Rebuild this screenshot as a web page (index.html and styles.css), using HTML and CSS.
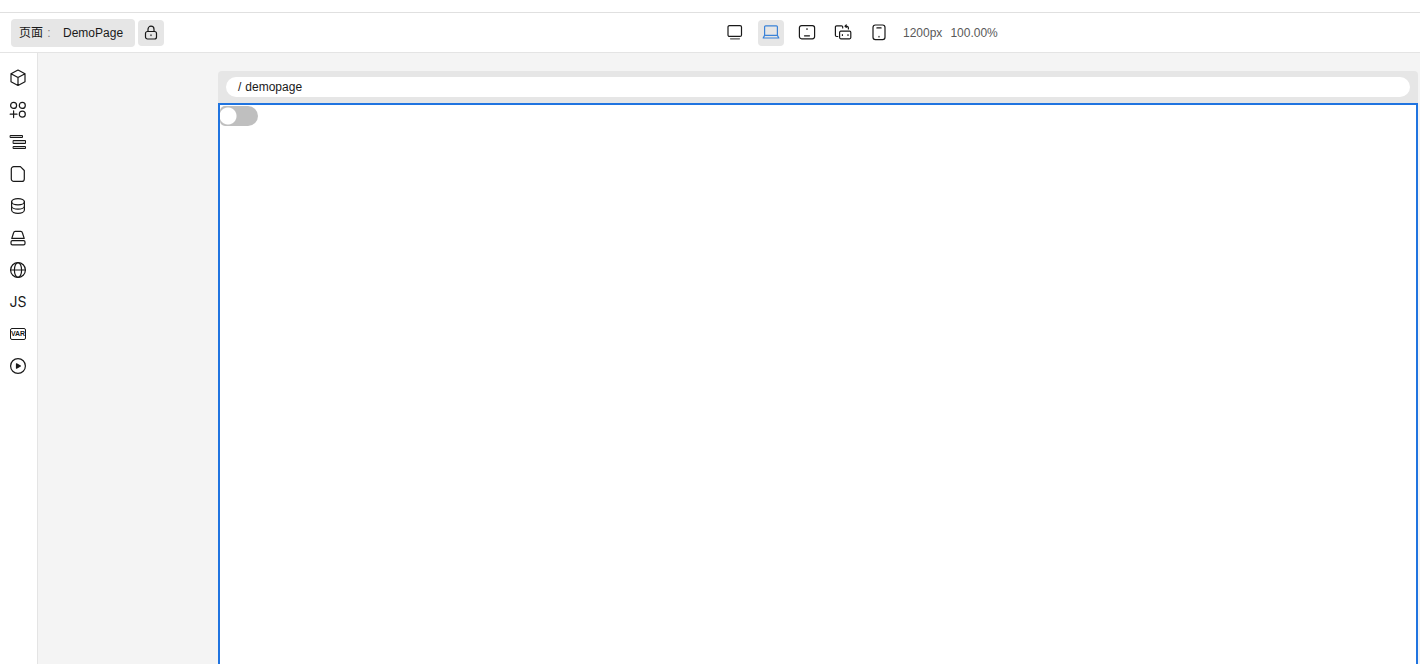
FILE: index.html
```html
<!DOCTYPE html>
<html lang="zh-CN">
<head>
<meta charset="utf-8">
<meta name="viewport" content="width=device-width, initial-scale=1">
<title>DemoPage</title>
<link rel="stylesheet" href="styles.css">
</head>
<body>
<div class="top-strip"></div>
<header class="toolbar">
  <div class="page-info">
    <button class="page-chip" type="button"><span class="page-label">页面<span class="colon">:</span></span><span>DemoPage</span></button>
    <button class="icon-button lock" type="button" aria-label="锁定">
      <svg class="icon" viewBox="0 0 18 18"><rect x="3.5" y="7.5" width="11" height="7.5" rx="2"/><path d="M6 7.5V5.2a3 3 0 0 1 6 0v2.3"/><path d="M9 10.8v.8"/></svg>
    </button>
  </div>
  <div class="viewport-tools">
    <button class="icon-button" type="button" aria-label="桌面">
      <svg class="icon" viewBox="0 0 18 18"><rect x="2" y="1.6" width="13.5" height="10.8" rx="1.5"/><path class="soft" d="M4.5 14.8h9"/></svg>
    </button>
    <button class="icon-button active" type="button" aria-label="笔记本">
      <svg class="icon" viewBox="0 0 18 18"><rect x="2.6" y="1.8" width="12.8" height="9.6" rx="1"/><path d="M2.6 11.4 1.2 14h15.6l-1.4-2.6"/></svg>
    </button>
    <button class="icon-button" type="button" aria-label="平板横屏">
      <svg class="icon" viewBox="0 0 18 18"><rect x="1.4" y="1.6" width="15.2" height="13.2" rx="2.2"/><path d="M9 4.7v.8M6.5 11.8h5"/></svg>
    </button>
    <button class="icon-button" type="button" aria-label="旋转">
      <svg class="icon" viewBox="0 0 18 18"><path d="M3.8 12.5H2.6a1.2 1.2 0 0 1-1.2-1.2V3a1.2 1.2 0 0 1 1.2-1.2h4.9A1.2 1.2 0 0 1 8.700 3v1"/><rect x="5.6" y="7.2" width="11.2" height="7.6" rx="1.2"/><path d="M8.400 10.700v.8M14 10.700v.8M11.200 2.200h1.200a2 2 0 0 1 2 2v.8M12.300 1l-1.300 1.200 1.300 1.200"/></svg>
    </button>
    <button class="icon-button" type="button" aria-label="手机">
      <svg class="icon" viewBox="0 0 18 18"><rect x="3" y="1" width="12" height="14.6" rx="2.4"/><path d="M6.900 3.900h4.200M9 12.400v.6"/></svg>
    </button>
    <div class="metrics"><span>1200px</span><span>100.00%</span></div>
  </div>
</header>
<div class="workspace">
  <nav class="sidebar" aria-label="工具">
    <button class="tool" type="button" aria-label="组件"><svg class="icon" viewBox="0 0 18 18"><path d="m9 1 7 3.700v8L9 16.500l-7-3.800v-8zM2 4.700l7 3.800 7-3.800M9 8.500v8"/></svg></button>
    <button class="tool" type="button" aria-label="区块"><svg class="icon" viewBox="0 0 18 18"><circle cx="4.600" cy="4.400" r="3"/><circle cx="13.300" cy="4.400" r="3"/><circle cx="13.300" cy="13.200" r="3"/><path d="M1.200 13.200H8M4.600 9.800v6.800"/></svg></button>
    <button class="tool" type="button" aria-label="大纲"><svg class="icon tree" viewBox="0 0 18 18"><rect x="1.500" y="2.500" width="12" height="2"/><rect x="4.500" y="7.500" width="12" height="3"/><rect x="4.500" y="13.500" width="12" height="2"/></svg></button>
    <button class="tool" type="button" aria-label="页面"><svg class="icon" viewBox="0 0 18 18"><path d="M4.800 1.600h6.600l3.900 3.900v8.400a2.500 2.500 0 0 1-2.500 2.500h-8a2.500 2.500 0 0 1-2.500-2.500V4.100a2.500 2.500 0 0 1 2.500-2.500z"/></svg></button>
    <button class="tool" type="button" aria-label="数据源"><svg class="icon" viewBox="0 0 18 18"><ellipse cx="9" cy="4.700" rx="6.400" ry="3.100"/><path d="M2.600 4.700v8.400c0 1.800 2.900 3.200 6.400 3.200s6.400-1.400 6.400-3.200V4.700M2.600 8.900c0 1.800 2.900 3.200 6.400 3.200s6.400-1.400 6.400-3.200"/></svg></button>
    <button class="tool" type="button" aria-label="资源"><svg class="icon" viewBox="0 0 18 18"><path d="M2.800 9.400 4.700 3.500Q5 2.400 6.200 2.400h5.600q1.200 0 1.500 1.100l1.900 5.900z"/><rect x="2" y="11.600" width="14" height="4.200" rx="1.400"/></svg></button>
    <button class="tool" type="button" aria-label="国际化"><svg class="icon" viewBox="0 0 18 18"><circle cx="9" cy="9" r="7.400"/><ellipse cx="9" cy="9" rx="3.600" ry="7.400"/><path d="M1.600 9h14.800"/></svg></button>
    <button class="tool tool-js" type="button">JS</button>
    <button class="tool" type="button"><span class="var-badge">VAR</span></button>
    <button class="tool" type="button" aria-label="运行"><svg class="icon" viewBox="0 0 18 18"><circle cx="9" cy="9" r="7.400"/><path class="solid" d="m7.500 6.800 3.900 2.200-3.900 2.200z"/></svg></button>
  </nav>
  <main class="stage">
    <div class="address-bar">
      <label class="address"><span>/</span><input class="address-input" type="text" value="demopage" aria-label="路径"></label>
    </div>
    <section class="canvas">
      <input class="switch" type="checkbox" role="switch" aria-label="开关">
    </section>
  </main>
</div>
</body>
</html>
```
FILE: styles.css
```css
* {
  box-sizing: border-box;
}

body {
  margin: 0;
  min-height: 100vh;
  display: flex;
  flex-direction: column;
  background: #fff;
  color: #191919;
  font: 12px/18px "Liberation Sans", "Noto Sans CJK SC", sans-serif;
}

button,
input {
  font: inherit;
  color: inherit;
}

button {
  border: 0;
  padding: 0;
  background: none;
}

.top-strip {
  height: 13px;
  border-bottom: 1px solid #e0e0e0;
}

.toolbar {
  display: grid;
  grid-template-columns: 1fr 1fr;
  height: 40px;
  border-bottom: 1px solid #e4e4e4;
}

.page-info,
.viewport-tools {
  display: flex;
  align-items: center;
}

.page-info {
  gap: 3px;
  padding-left: 11px;
}

.viewport-tools {
  gap: 10px;
  padding-left: 12px;
}

.page-chip {
  display: flex;
  gap: 12px;
  align-items: center;
  height: 28px;
  padding: 0 12px 0 8px;
  border-radius: 4px;
  background: #e6e6e6;
}

.page-label {
  display: flex;
  gap: 4px;
}

.colon {
  width: 4px;
  color: #808080;
}

.icon-button {
  display: grid;
  place-items: center;
  width: 26px;
  height: 26px;
  border-radius: 4px;
}

.lock,
.active {
  background: #e6e6e6;
}

.active {
  color: #3982d8;
}

.icon {
  display: block;
  width: 18px;
  height: 18px;
  fill: none;
  stroke: currentColor;
  stroke-width: 1.2;
  stroke-linecap: round;
  stroke-linejoin: round;
}

.soft {
  stroke: #555;
}

.solid {
  fill: currentColor;
}

.tree {
  fill: #c8c8c8;
  stroke-width: 1;
}

.metrics {
  display: flex;
  gap: 8px;
  padding-left: 1px;
  color: #595959;
}

.workspace {
  flex: 1;
  display: flex;
}

.sidebar {
  display: flex;
  flex-direction: column;
  width: 38px;
  padding-top: 9px;
  border-right: 1px solid #e4e4e4;
}

.tool {
  display: grid;
  place-items: center;
  width: 36px;
  height: 32px;
}

.tool-js {
  font: 14px/18px Inter, sans-serif;
}

.var-badge {
  width: 16px;
  height: 12px;
  border: 1px solid #191919;
  border-radius: 2px;
  font: bold 7px/10px "Liberation Sans", sans-serif;
  display: flex;
  justify-content: center;
}

.stage {
  flex: 1;
  display: flex;
  flex-direction: column;
  padding: 18px 2px 0 180px;
  background: #f4f4f4;
}

.address-bar {
  height: 32px;
  padding: 6px 8px;
  border-radius: 4px 4px 0 0;
  background: #e6e6e6;
}

.address {
  display: flex;
  align-items: center;
  gap: 4px;
  height: 20px;
  padding: 0 12px;
  border-radius: 10px;
  background: #fff;
}

.address-input {
  flex: 1;
  min-width: 0;
  padding: 0;
  border: 0;
  background: none;
}

.canvas {
  flex: 1;
  border: 2px solid #2074e0;
  border-bottom: 0;
  background: #fff;
}

.switch {
  appearance: none;
  display: block;
  width: 38px;
  height: 20px;
  margin: 1px 0;
  border-radius: 5px 10px 10px 5px;
  background: radial-gradient(circle at 8px 10px, #fff 8px, #bfbfbf 9px);
}
```
